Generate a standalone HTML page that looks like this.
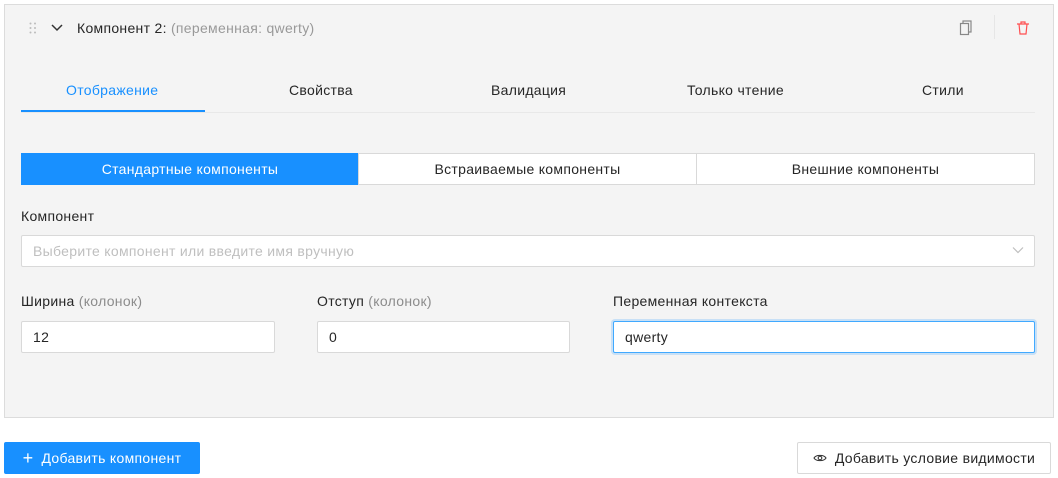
<!DOCTYPE html>
<html><head><meta charset="utf-8"><style>
*{box-sizing:border-box;margin:0;padding:0}
body{width:1058px;height:478px;background:#fff;font-family:"Liberation Sans",sans-serif;font-size:14px;color:#262626;position:relative;overflow:hidden;letter-spacing:0.3px}
.abs{position:absolute}
.panel{left:4px;top:4px;width:1050px;height:414px;background:#f4f4f4;border:1px solid #dcdcdc}
.tab{top:82px;font-size:14px;color:#262626}
.seg{top:153px;height:32px;border:1px solid #d9d9d9;background:#fff;font-size:14px;display:flex;align-items:center;justify-content:center}
.inp{height:32px;background:#fff;border:1px solid #d9d9d9;border-radius:2px;padding-left:11px;display:flex;align-items:center;font-size:14px}
.lbl{font-size:14px;color:#262626}
.lbl span{color:#8c8c8c}
</style></head><body>
<div class="abs panel"></div>
<svg class="abs" style="left:29px;top:22px" width="8" height="12"><g fill="#bbb"><circle cx="1.5" cy="1.5" r="1"/><circle cx="6" cy="1.5" r="1"/><circle cx="1.5" cy="6" r="1"/><circle cx="6" cy="6" r="1"/><circle cx="1.5" cy="10.5" r="1"/><circle cx="6" cy="10.5" r="1"/></g></svg>
<svg class="abs" style="left:50px;top:23px" width="14" height="10"><path d="M2 2 L7 7 L12 2" stroke="#333" stroke-width="1.5" fill="none"/></svg>
<div class="abs" style="left:77px;top:20px;font-size:14px">Компонент 2: <span style="color:#999">(переменная: qwerty)</span></div>
<svg class="abs" style="left:959px;top:20px" width="14" height="16"><rect x="4" y="1" width="8" height="11" fill="none" stroke="#888" stroke-width="1.2"/><rect x="1.5" y="3.5" width="8" height="11" fill="#f4f4f4" stroke="#888" stroke-width="1.2"/></svg>
<div class="abs" style="left:994px;top:15px;width:1px;height:24px;background:#e6e6e6"></div>
<svg class="abs" style="left:1016px;top:20px" width="14" height="16"><path d="M1 4h12M5 4V2h4v2M3 4l1 10h6l1-10" fill="none" stroke="#ff4d4f" stroke-width="1.2"/></svg>
<div class="abs" style="left:21px;top:112px;width:1014px;height:1px;background:#e8e8e8"></div>
<div class="abs" style="left:21px;top:110px;width:184px;height:2px;background:#1890ff"></div>
<div class="abs tab" style="left:66px;color:#1890ff">Отображение</div>
<div class="abs tab" style="left:289px">Свойства</div>
<div class="abs tab" style="left:491px">Валидация</div>
<div class="abs tab" style="left:687px">Только чтение</div>
<div class="abs tab" style="left:922px">Стили</div>
<div class="abs seg" style="left:21px;width:338px;background:#1890ff;border-color:#1890ff;color:#fff">Стандартные компоненты</div>
<div class="abs seg" style="left:358px;width:339px">Встраиваемые компоненты</div>
<div class="abs seg" style="left:696px;width:339px">Внешние компоненты</div>
<div class="abs lbl" style="left:21px;top:208px">Компонент</div>
<div class="abs inp" style="left:21px;top:235px;width:1014px;color:#bfbfbf">Выберите компонент или введите имя вручную</div>
<svg class="abs" style="left:1012px;top:246px" width="12" height="8"><path d="M1 1.5L6 6.5L11 1.5" stroke="#bfbfbf" fill="none" stroke-width="1.2"/></svg>
<div class="abs lbl" style="left:21px;top:293px">Ширина <span>(колонок)</span></div>
<div class="abs lbl" style="left:317px;top:293px">Отступ <span>(колонок)</span></div>
<div class="abs lbl" style="left:613px;top:293px">Переменная контекста</div>
<div class="abs inp" style="left:21px;top:321px;width:254px">12</div>
<div class="abs inp" style="left:317px;top:321px;width:253px">0</div>
<div class="abs inp" style="left:613px;top:321px;width:422px;border-color:#40a9ff;box-shadow:0 0 0 2px rgba(24,144,255,.2)">qwerty</div>
<div class="abs" style="left:4px;top:442px;width:196px;height:32px;background:#1890ff;border-radius:2px;color:#fff;display:flex;align-items:center;justify-content:center;font-size:14px"><span style="font-size:18px;margin-right:8px">+</span>Добавить компонент</div>
<div class="abs" style="left:797px;top:442px;width:254px;height:32px;background:#fff;border:1px solid #d9d9d9;border-radius:2px;display:flex;align-items:center;justify-content:center;font-size:14px"><svg width="14" height="12" style="margin-right:8px"><path d="M1 6C3 2.5 11 2.5 13 6C11 9.5 3 9.5 1 6Z" fill="none" stroke="#333" stroke-width="1.1"/><circle cx="7" cy="6" r="1.8" fill="none" stroke="#333" stroke-width="1.1"/></svg>Добавить условие видимости</div>
</body></html>
